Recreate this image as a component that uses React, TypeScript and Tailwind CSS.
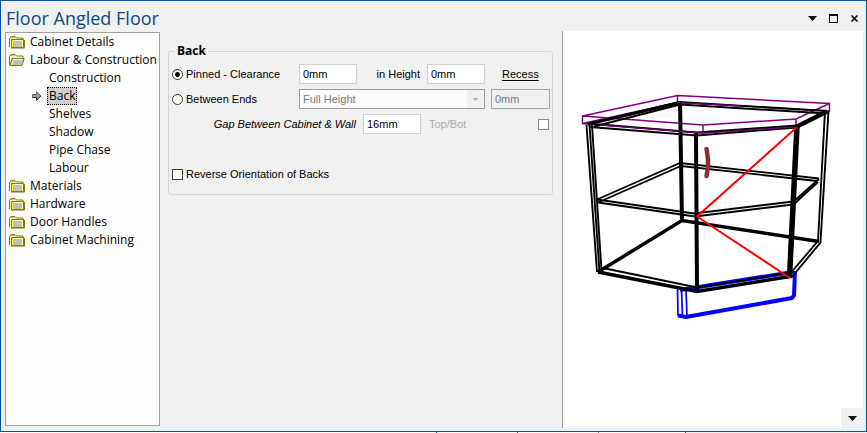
import { useState } from 'react';
import clsx from 'clsx';

type TreeItem = { label: string; kind: 'closed' | 'open' | 'child' };

const treeItems: TreeItem[] = [
  { label: 'Cabinet Details', kind: 'closed' },
  { label: 'Labour & Construction', kind: 'open' },
  { label: 'Construction', kind: 'child' },
  { label: 'Back', kind: 'child' },
  { label: 'Shelves', kind: 'child' },
  { label: 'Shadow', kind: 'child' },
  { label: 'Pipe Chase', kind: 'child' },
  { label: 'Labour', kind: 'child' },
  { label: 'Materials', kind: 'closed' },
  { label: 'Hardware', kind: 'closed' },
  { label: 'Door Handles', kind: 'closed' },
  { label: 'Cabinet Machining', kind: 'closed' },
];

const fieldClass = 'h-5 w-[58px] border border-[#d0d0d0] bg-white px-[3px] text-black outline-none';

function FolderIcon({ open }: { open: boolean }) {
  return (
    <svg width="16" height="14" viewBox="0 0 16 14" aria-hidden="true" className="shrink-0">
      <path d="M.5 12V3.500L2 2V1.500h4L7.500 3H14v2" fill="#f4f4dc" stroke="#808000" />
      <path d="M2 2.500h4" stroke="#c0c0c0" />
      {open ? (
        <>
          <path d="M.8 12.500 3.200 5.500h12L13 12.500Z" fill="#c0c0c0" stroke="#808000" />
          <path d="m2.600 11.500 1.800-5h9" fill="none" stroke="#ffffc0" />
        </>
      ) : (
        <>
          <path d="M2.500 4.500h12v8h-12Z" fill="#c0c0c0" stroke="#808000" />
          <path d="M3.500 12V5.500" fill="none" stroke="#ffff00" />
          <path d="M4 5.500h9.500V12" fill="none" stroke="#ffffc0" />
          <path d="M15.500 5v8H2" fill="none" stroke="#808000" />
        </>
      )}
    </svg>
  );
}

function ArrowIcon() {
  return (
    <svg width="10" height="10" viewBox="0 0 10 10" aria-hidden="true">
      <path d="M.5 3.500h4V.8L9 5 4.500 9.200V6.500h-4Z" fill="#a0a0a0" stroke="#606060" />
      <path d="M.5 6.500h4v2.700L9 5" fill="none" stroke="#303820" />
    </svg>
  );
}

function DownTriangle() {
  return (
    <svg width="9" height="5" viewBox="0 0 9 5" aria-hidden="true">
      <path d="M0 0h9L4.500 5Z" fill="currentColor" />
    </svg>
  );
}

function TitleBar() {
  return (
    <header className="flex h-[30px] items-center justify-between pl-[5px] pr-[7px]">
      <h1 className="pt-1 font-['Open_Sans',sans-serif] text-[18px] leading-6 text-[#0f4780]">Floor Angled Floor</h1>
      <div className="flex items-center gap-3 pt-1">
        <button type="button" aria-label="Menu">
          <DownTriangle />
        </button>
        <button type="button" aria-label="Maximise">
          <svg width="9" height="9" viewBox="0 0 9 9">
            <path d="M.5 1v7.500h8V1M0 1h9" fill="none" stroke="#000" />
            <path d="M0 0h9v2H0Z" />
          </svg>
        </button>
        <button type="button" aria-label="Close">
          <svg width="9" height="9" viewBox="0 0 9 9">
            <path d="m1.500 1.500 6 6M7.500 1.500l-6 6" stroke="#000" strokeWidth="1.600" />
          </svg>
        </button>
      </div>
    </header>
  );
}

function Tree() {
  const [selected, setSelected] = useState('Back');

  return (
    <nav className="w-[155px] shrink-0 border border-[#a0a0a0] bg-[#fdfdfd] font-['Open_Sans',sans-serif] text-[12px] leading-4 text-black">
      <ul>
        {treeItems.map(({ label, kind }) => {
          const isSelected = label === selected;
          return (
            <li key={label} className="flex h-[18px] items-center whitespace-nowrap pl-[3px]">
              {kind === 'child' ? (
                <span className="flex w-[38px] shrink-0 justify-end pr-[5px]">{isSelected && <ArrowIcon />}</span>
              ) : (
                <span className="flex w-5 shrink-0">
                  <FolderIcon open={kind === 'open'} />
                </span>
              )}
              <button
                type="button"
                onClick={() => setSelected(label)}
                className={clsx(
                  'border border-dotted',
                  kind === 'child' && 'px-px',
                  isSelected ? 'border-black bg-[#d0d0d0]' : 'border-transparent',
                )}
              >
                {label}
              </button>
            </li>
          );
        })}
      </ul>
    </nav>
  );
}

function BackPanel() {
  const [mode, setMode] = useState('pinned');
  const radioClass =
    'size-[11px] shrink-0 appearance-none rounded-full border border-[#333333] bg-white checked:bg-[radial-gradient(#000_0_2px,#fff_3px)]';

  return (
    <fieldset className="rounded-[3px] border border-[#d5d5d5] pb-3 pl-[3px] pr-[2px] text-[11px] leading-4 text-black">
      <legend className="ml-[3px] px-[2px] font-['Open_Sans',sans-serif] text-[12px] font-bold leading-4">Back</legend>
      <div className="mt-1 flex h-[25px] items-center pb-[3px]">
        <label className="flex w-[127px] items-center gap-[3px] whitespace-nowrap">
          <input
            type="radio"
            name="mode"
            className={radioClass}
            checked={mode === 'pinned'}
            onChange={() => setMode('pinned')}
          />
          Pinned - Clearance
        </label>
        <input type="text" aria-label="Clearance" defaultValue="0mm" className={fieldClass} />
        <label htmlFor="in-height" className="grow pr-[7px] text-right">
          in Height
        </label>
        <input id="in-height" type="text" defaultValue="0mm" className={fieldClass} />
        <a href="#recess" className="w-[65px] pl-[17px] underline underline-offset-2">
          Recess
        </a>
      </div>
      <div className="flex h-[25px] items-center pb-[3px]">
        <label className="flex w-[127px] items-center gap-[3px] whitespace-nowrap">
          <input
            type="radio"
            name="mode"
            className={radioClass}
            checked={mode === 'between'}
            onChange={() => setMode('between')}
          />
          Between Ends
        </label>
        <div className="relative grow">
          <select
            disabled
            aria-label="Height"
            className="block h-5 w-full appearance-none border border-[#999999] bg-[#fbfbfb] px-[3px] text-[#7b7b7b] opacity-100"
          >
            <option>Full Height</option>
          </select>
          <span className="pointer-events-none absolute inset-y-px right-px flex w-[17px] items-center justify-center bg-[#f0f0f0] text-[#b0b0b0]">
            <svg width="5" height="3" viewBox="0 0 5 3">
              <path d="M0 0h5L2.500 3Z" fill="currentColor" />
            </svg>
          </span>
        </div>
        <input
          type="text"
          disabled
          aria-label="Recess"
          defaultValue="0mm"
          className="ml-[6px] h-5 w-[59px] border border-[#a5a5a5] bg-[#f0f0f0] px-[3px] text-[#7b7b7b]"
        />
      </div>
      <div className="flex h-[25px] items-center pb-[3px]">
        <label htmlFor="gap" className="w-[191px] whitespace-nowrap pr-[7px] text-right italic">
          Gap Between Cabinet &amp; Wall
        </label>
        <input id="gap" type="text" defaultValue="16mm" className={fieldClass} />
        <label htmlFor="top-bot" className="grow pl-2 text-[#aaaaaa]">
          Top/Bot
        </label>
        <input
          id="top-bot"
          type="checkbox"
          className="mr-[1px] size-[11px] appearance-none border border-[#888888] bg-white checked:bg-[#888888]"
        />
      </div>
      <label className="mt-7 flex items-center gap-[3px]">
        <input
          type="checkbox"
          className="size-[11px] appearance-none border border-[#444444] bg-white checked:bg-[#444444]"
        />
        Reverse Orientation of Backs
      </label>
    </fieldset>
  );
}

function CabinetDrawing() {
  return (
    <svg viewBox="563 31 300 397" className="h-full w-full" fill="none" role="img" aria-label="Cabinet wireframe">
      {/* kick */}
      <g stroke="#0000ff">
        <path d="M677.500 289 678 316M681.500 289l1 28M686 289l1 29" strokeWidth="1.700" />
        <path d="m678 315.500 8 1.500L792 298l2-2.500 1-24.500" strokeWidth="4" strokeLinejoin="round" />
        <path d="m680 290 113-18" strokeWidth="4" />
      </g>
      {/* bench top */}
      <g stroke="#800080" strokeWidth="1.500">
        <path d="m582.500 116 95-20.500 152 8v7.500L796 127l-93 6-120.500-9.500ZM582.500 116l120.500 9 93-6 33.500-15.500M703 125v8M796 119v8M677.500 95.500v7M582.500 123.500l95-21 152 8.500" />
      </g>
      {/* carcase */}
      <g stroke="#000">
        <g strokeWidth="1.900">
          <path d="M586.500 125 597 272M589.500 125l10 147M592 125l9.500 145" />
          <path d="m588 124 91-22 148 9M594 126.500l86-22 146 9M588 123.500l109 9 100-7M590 127l107 8.500 100-8" />
          <path d="m825 111-7 130M828.500 111l-8 131" />
          <path d="m597 199.500 83-36.500 139 15.500M598 202.500l83-36.500 136 15M597 199.500l97 14 99-12M598 202.500l97 14 98-12M793 202l26-23M793 205l25-23" />
          <path d="m603 268 94 19.500 93-15" />
          <path d="M789 275l29-34M791 278l30-36" />
        </g>
        <path d="m588 124 91-21" strokeWidth="3" />
        <path d="m797 126.500 30-15" strokeWidth="4.500" />
        <path d="m680 101 2 120M696 132l1 159" strokeWidth="4" />
        <path d="m797 126-7.500 151" strokeWidth="5.500" />
        <path d="m598 272 84-51.500 137 21M598 272l99 19.500 93-15" strokeWidth="3.500" />
      </g>
      <path d="M677.500 102.500 740 106M600 125l103 8 92-6" stroke="#800080" />
      <path d="m706.500 149 .5 3 1 8v7l-1.500 9" stroke="#8b3030" strokeWidth="4.500" strokeLinecap="round" />
      <path d="m797 127-100 89.500 93 61.500" stroke="#ff0000" strokeWidth="2" />
    </svg>
  );
}

export default function App() {
  return (
    <div className="flex h-screen flex-col bg-[#f0f0f0] font-['Liberation_Sans',sans-serif]">
      <main className="flex min-h-0 grow flex-col border border-[#0054a0]">
        <TitleBar />
        <div className="flex min-h-0 grow pb-[3px] pl-1 pr-[3px]">
          <div className="flex shrink-0 pb-[2px] pt-px">
            <Tree />
          </div>
          <section className="w-[402px] shrink-0 pl-2 pr-[9px] pt-3">
            <BackPanel />
          </section>
          <aside className="relative min-w-0 grow border-l border-[#a0a0a0] bg-white">
            <CabinetDrawing />
            <button
              type="button"
              aria-label="View options"
              className="absolute bottom-0 right-0 flex h-5 w-[22px] items-center justify-center bg-[#f0f0f0]"
            >
              <DownTriangle />
            </button>
          </aside>
        </div>
      </main>
      <footer className="flex h-px shrink-0 bg-white">
        <span className="w-[437px] border-r border-[#0054a0]" />
        <span className="w-[81px] border-r border-[#0054a0]" />
        <span className="w-[81px] border-r border-[#808080]" />
        <span className="w-[87px] border-r border-[#0054a0]" />
        <span className="grow bg-[#f0f0f0]" />
      </footer>
    </div>
  );
}
